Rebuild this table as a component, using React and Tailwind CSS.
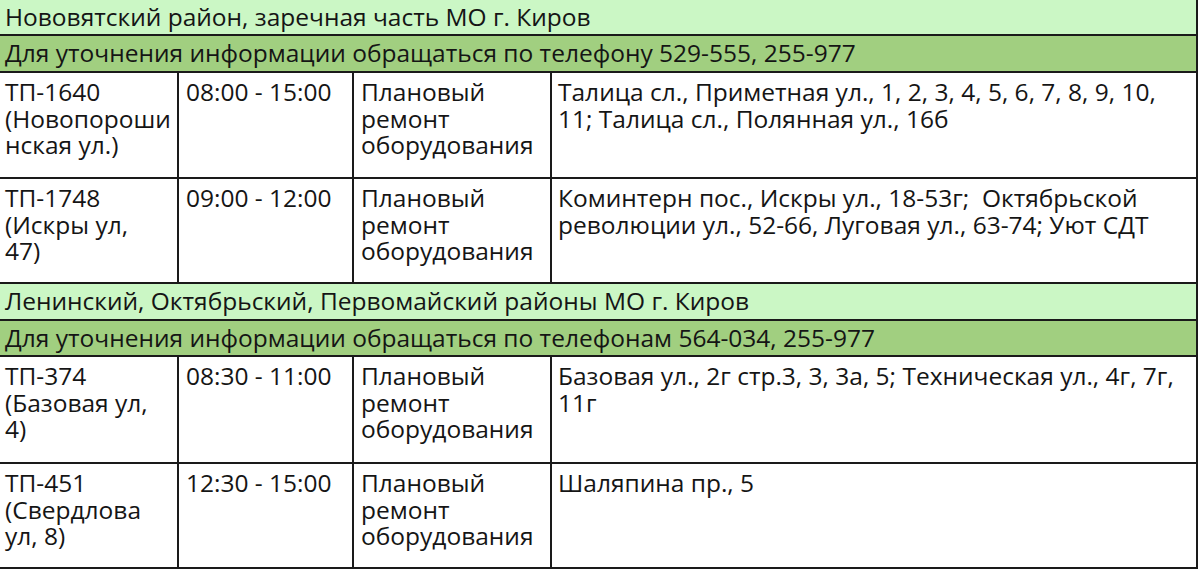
const groups = [
    {
        area: 'Нововятский район, заречная часть МО г. Киров',
        phone: 'Для уточнения информации обращаться по телефону 529-555, 255-977',
        areaH: 'h-[36px]',
        phoneH: 'h-[37px]',
        rows: [
            {
                h: 'h-[106px]',
                tp: ['ТП-1640', '(Новопороши', 'нская ул.)'],
                time: '08:00 - 15:00',
                addr: ['Талица сл., Приметная ул., 1, 2, 3, 4, 5, 6, 7, 8, 9, 10,', '11; Талица сл., Полянная ул., 16б'],
            },
            {
                h: 'h-[105px]',
                tp: ['ТП-1748', '(Искры ул,', '47)'],
                time: '09:00 - 12:00',
                addr: ['Коминтерн пос., Искры ул., 18-53г;  Октябрьской', 'революции ул., 52-66, Луговая ул., 63-74; Уют СДТ'],
            },
        ],
    },
    {
        area: 'Ленинский, Октябрьский, Первомайский районы МО г. Киров',
        phone: 'Для уточнения информации обращаться по телефонам 564-034, 255-977',
        areaH: 'h-[37px]',
        phoneH: 'h-[36px]',
        rows: [
            {
                h: 'h-[107px]',
                tp: ['ТП-374', '(Базовая ул,', '4)'],
                time: '08:30 - 11:00',
                addr: ['Базовая ул., 2г стр.3, 3, 3а, 5; Техническая ул., 4г, 7г,', '11г'],
            },
            {
                h: 'h-[105px]',
                tp: ['ТП-451', '(Свердлова', 'ул, 8)'],
                time: '12:30 - 15:00',
                addr: ['Шаляпина пр., 5'],
            },
        ],
    },
];

// one line per array item, no automatic wrapping
const Lines = ({ items }) => (
    <>
        {items.map((t, i) => (
            <div key={i} className="whitespace-pre">{t}</div>
        ))}
    </>
);

export default function App() {
    return (
        <div className="w-[1200px] h-[569px] overflow-hidden bg-white">
            <div className="w-[1198px] border-r-2 border-[#1a1a1a] text-[#151515] font-['Open_Sans',sans-serif] text-[24.5px] leading-[26.5px]">
                {groups.map((g, gi) => (
                    <div key={gi}>
                        <div className={`${g.areaH} flex items-center px-[5px] bg-[#cbf7c5] border-b-2 border-[#1a1a1a] whitespace-nowrap`}>
                            {g.area}
                        </div>
                        <div className={`${g.phoneH} flex items-center px-[5px] bg-[#a1cf80] border-b-2 border-[#1a1a1a] whitespace-nowrap`}>
                            {g.phone}
                        </div>
                        {g.rows.map((r, ri) => (
                            <div key={ri} className={`${r.h} flex border-b-2 border-[#1a1a1a]`}>
                                <div className="w-[179px] shrink-0 border-r-2 border-[#1a1a1a] pl-[5px] pt-[6px]">
                                    <Lines items={r.tp} />
                                </div>
                                <div className="w-[175px] shrink-0 border-r-2 border-[#1a1a1a] pl-[7px] pt-[6px] whitespace-nowrap">
                                    {r.time}
                                </div>
                                <div className="w-[198px] shrink-0 border-r-2 border-[#1a1a1a] pl-[7px] pt-[6px]">
                                    <Lines items={['Плановый', 'ремонт', 'оборудования']} />
                                </div>
                                <div className="flex-1 pl-[6px] pt-[6px]">
                                    <Lines items={r.addr} />
                                </div>
                            </div>
                        ))}
                    </div>
                ))}
            </div>
        </div>
    );
}
